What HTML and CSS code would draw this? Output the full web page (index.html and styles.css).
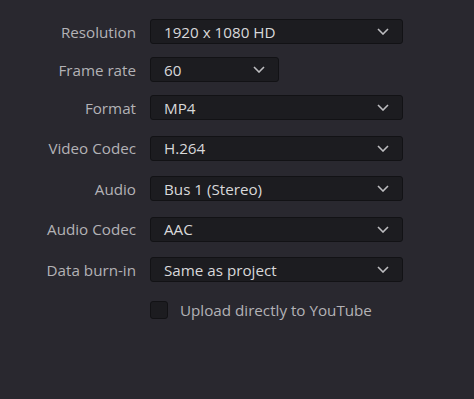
FILE: index.html
```html
<!DOCTYPE html>
<html lang="en">
<head>
  <meta charset="UTF-8" />
  <meta name="viewport" content="width=device-width, initial-scale=1.0" />
  <title>Render settings</title>
  <link rel="stylesheet" href="styles.css">
</head>
<body>
  <div class="panel">
    <div class="row tight">
      <label>Resolution</label>
      <div class="select">1920 x 1080 HD <svg class="chev" viewBox="0 0 12 7"><path d="M1 1l5 5 5-5"/></svg></div>
    </div>
    <div class="row tight">
      <label>Frame rate</label>
      <div class="select short">60 <svg class="chev" viewBox="0 0 12 7"><path d="M1 1l5 5 5-5"/></svg></div>
    </div>
    <div class="row">
      <label>Format</label>
      <div class="select">MP4 <svg class="chev" viewBox="0 0 12 7"><path d="M1 1l5 5 5-5"/></svg></div>
    </div>
    <div class="row">
      <label>Video Codec</label>
      <div class="select">H.264 <svg class="chev" viewBox="0 0 12 7"><path d="M1 1l5 5 5-5"/></svg></div>
    </div>
    <div class="row">
      <label>Audio</label>
      <div class="select">Bus 1 (Stereo) <svg class="chev" viewBox="0 0 12 7"><path d="M1 1l5 5 5-5"/></svg></div>
    </div>
    <div class="row">
      <label>Audio Codec</label>
      <div class="select">AAC <svg class="chev" viewBox="0 0 12 7"><path d="M1 1l5 5 5-5"/></svg></div>
    </div>
    <div class="row">
      <label>Data burn-in</label>
      <div class="select">Same as project <svg class="chev" viewBox="0 0 12 7"><path d="M1 1l5 5 5-5"/></svg></div>
    </div>
    <div class="row">
      <label></label>
      <span class="box"></span>
      <span class="check-text">Upload directly to YouTube</span>
    </div>
  </div>
</body>
</html>
```

FILE: styles.css
```css
:root {
  --bg: #29282f;
  --field: #1c1c20;
  --field-border: #121215;
  --label: #b3b2b6;
  --value: #d8d8da;
}

body {
  margin: 0;
  background: var(--bg);
  font-family: 'Open Sans', sans-serif;
  font-size: 15.2px;
}

.panel {
  display: flex;
  flex-direction: column;
  gap: 15.5px;
  padding-top: 19px;
}

.row {
  display: flex;
  align-items: center;
  height: 25px;
}

.row.tight {
  margin-bottom: -2.5px;
}

.row label {
  width: 136px;
  text-align: right;
  color: var(--label);
  margin-right: 14px;
  flex-shrink: 0;
}

.select {
  box-sizing: border-box;
  width: 253px;
  height: 25px;
  display: flex;
  align-items: center;
  justify-content: space-between;
  padding: 0 13px 0 13px;
  background: var(--field);
  border: 1px solid var(--field-border);
  border-radius: 3px;
  color: var(--value);
}

.select.short {
  width: 129px;
}

.chev {
  width: 12px;
  height: 7px;
  fill: none;
  stroke: #bdbdc0;
  stroke-width: 1.6;
}

.box {
  box-sizing: border-box;
  width: 18px;
  height: 18px;
  background: var(--field);
  border: 1px solid var(--field-border);
  border-radius: 3px;
  margin-right: 12px;
}

.check-text {
  color: var(--label);
}
```
